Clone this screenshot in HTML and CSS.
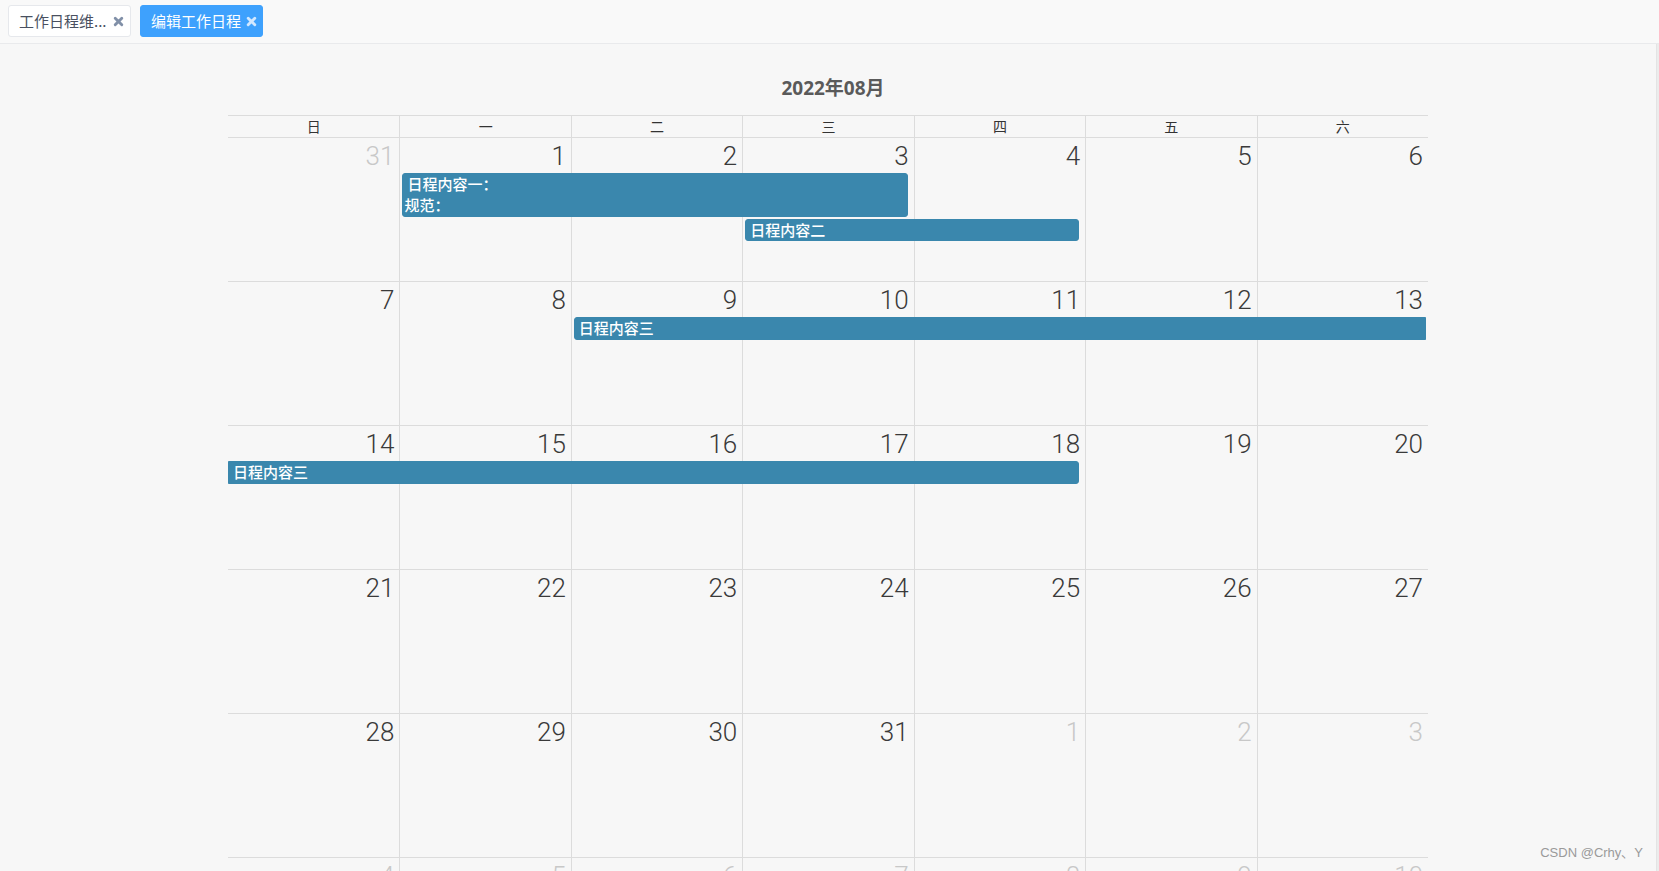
FILE: index.html
```html
<!DOCTYPE html>
<html lang="zh-CN">
<head>
<meta charset="utf-8">
<title>编辑工作日程</title>
<link rel="stylesheet" href="styles.css">
</head>
<body>
<div class="topbar">
  <div class="tab">
    <span class="tab-text">工作日程维...</span>
    <svg class="tab-close" viewBox="0 0 10 10"><path d="M2 2 L8 8 M8 2 L2 8"/></svg>
  </div>
  <div class="tab tab-active">
    <span class="tab-text">编辑工作日程</span>
    <svg class="tab-close" viewBox="0 0 10 10"><path d="M2 2 L8 8 M8 2 L2 8"/></svg>
  </div>
</div>
<div class="main">
  <div class="content">
    <div class="calendar">
      <h2 class="cal-title">2022年08月</h2>
      <div class="dow">
        <div>日</div><div>一</div><div>二</div><div>三</div><div>四</div><div>五</div><div>六</div>
      </div>
      <div class="weeks">
        <div class="week">
          <div class="day other">31</div>
          <div class="day">1</div>
          <div class="day">2</div>
          <div class="day">3</div>
          <div class="day">4</div>
          <div class="day">5</div>
          <div class="day">6</div>
          <div class="ev ev-start ev-end r2 c2-5"><span class="ev-first">日程内容一：</span><br>规范：</div>
          <div class="ev ev-start ev-end r3 c4-6"><span class="ev-first">日程内容二</span></div>
        </div>
        <div class="week">
          <div class="day">7</div>
          <div class="day">8</div>
          <div class="day">9</div>
          <div class="day">10</div>
          <div class="day">11</div>
          <div class="day">12</div>
          <div class="day">13</div>
          <div class="ev ev-start r2 c3-8"><span class="ev-first">日程内容三</span></div>
        </div>
        <div class="week">
          <div class="day">14</div>
          <div class="day">15</div>
          <div class="day">16</div>
          <div class="day">17</div>
          <div class="day">18</div>
          <div class="day">19</div>
          <div class="day">20</div>
          <div class="ev ev-end r2 c1-6"><span class="ev-first">日程内容三</span></div>
        </div>
        <div class="week">
          <div class="day">21</div>
          <div class="day">22</div>
          <div class="day">23</div>
          <div class="day">24</div>
          <div class="day">25</div>
          <div class="day">26</div>
          <div class="day">27</div>
        </div>
        <div class="week">
          <div class="day">28</div>
          <div class="day">29</div>
          <div class="day">30</div>
          <div class="day">31</div>
          <div class="day other">1</div>
          <div class="day other">2</div>
          <div class="day other">3</div>
        </div>
        <div class="week">
          <div class="day other">4</div>
          <div class="day other">5</div>
          <div class="day other">6</div>
          <div class="day other">7</div>
          <div class="day other">8</div>
          <div class="day other">9</div>
          <div class="day other">10</div>
        </div>
      </div>
    </div>
  </div>
  <div class="edge"></div>
</div>
<div class="watermark">CSDN @Crhy、Y</div>
</body>
</html>
```
FILE: styles.css
```css
html, body {
  margin: 0;
  padding: 0;
  height: 100%;
  overflow: hidden;
}
body {
  background: #f8f8f8;
  font-family: "Noto Sans CJK SC", "Noto Sans", sans-serif;
  color: #333;
  position: relative;
}

/* top tab bar */
.topbar {
  height: 44px;
  box-sizing: border-box;
  border-bottom: 1px solid #e9eaec;
  padding: 5px 0 0 8px;
  display: flex;
  gap: 9px;
  align-items: flex-start;
  background: #f9f9f9;
}
.tab {
  height: 32px;
  box-sizing: border-box;
  width: 123px;
  border: 1px solid #e6e8ec;
  border-radius: 3px;
  background: #fff;
  display: flex;
  align-items: center;
  padding: 0 6px 0 10px;
  color: #495060;
  font-size: 15px;
}
.tab-text {
  flex: 1;
  white-space: nowrap;
  line-height: 20px;
}
.tab-close {
  width: 11px;
  height: 11px;
  fill: none;
  stroke: #8190a8;
  stroke-width: 2.6;
  stroke-linecap: round;
}
.tab-active {
  background: #3ea1fd;
  border-color: #3ea1fd;
  color: #fff;
  padding-right: 5px;
}
.tab-active .tab-close {
  stroke: #d2e8ff;
}

/* main area */
.main {
  display: flex;
  height: calc(100% - 44px);
}
.content {
  flex: 1;
  background: #f7f7f7;
}
.edge {
  width: 2px;
  border-left: 1px solid #e4e4e4;
  background: #ececec;
}

.calendar {
  width: 1200px;
  margin: 0 auto;
}
.cal-title {
  margin: 0;
  padding: 32px 0 0 10px;
  height: 39px;
  box-sizing: content-box;
  text-align: center;
  font-size: 19px;
  line-height: 24px;
  font-weight: bold;
  color: #5a5a5a;
  font-family: "Open Sans", "Noto Sans CJK SC", sans-serif;
}

.dow {
  display: grid;
  grid-template-columns: repeat(7, 1fr);
  border-top: 1px solid #dcdcdc;
  border-bottom: 1px solid #dcdcdc;
  height: 23px;
  box-sizing: border-box;
  font-size: 14px;
  line-height: 21px;
  color: #333;
  text-align: center;
}
.dow > div + div {
  border-left: 1px solid #dcdcdc;
}

.week {
  display: grid;
  grid-template-columns: repeat(7, 1fr);
  grid-template-rows: 35px auto auto 1fr;
  height: 144px;
  box-sizing: border-box;
  border-bottom: 1px solid #dcdcdc;
}
.day {
  grid-row: 1 / -1;
  border-left: 1px solid #dcdcdc;
  text-align: right;
  padding: 5px 5px 0 0;
  font-family: "Roboto", "Lato", sans-serif;
  font-weight: 300;
  font-size: 26px;
  line-height: 26px;
  color: #3a3a3a;
}
.day:nth-child(1) { grid-column: 1; border-left: none; }
.day:nth-child(2) { grid-column: 2; }
.day:nth-child(3) { grid-column: 3; }
.day:nth-child(4) { grid-column: 4; }
.day:nth-child(5) { grid-column: 5; }
.day:nth-child(6) { grid-column: 6; }
.day:nth-child(7) { grid-column: 7; }
.day.other { color: #c8c8c8; }

.ev {
  z-index: 1;
  background: #3a87ad;
  border: 1px solid #3a87ad;
  color: #fff;
  font-size: 15px;
  line-height: 20.8px;
  font-weight: 500;
  padding: 0 1px;
  margin: 0 2px 2px 0;
  white-space: nowrap;
  overflow: hidden;
}
.ev-first { padding-left: 3px; }
.ev-start {
  margin-left: 3px;
  border-top-left-radius: 3px;
  border-bottom-left-radius: 3px;
}
.ev-end {
  margin-right: 6px;
  border-top-right-radius: 3px;
  border-bottom-right-radius: 3px;
}
.r2 { grid-row: 2; }
.r3 { grid-row: 3; }
.c2-5 { grid-column: 2 / 5; }
.c4-6 { grid-column: 4 / 6; }
.c3-8 { grid-column: 3 / 8; }
.c1-6 { grid-column: 1 / 6; }

.watermark {
  position: absolute;
  right: 16px;
  bottom: 10px;
  font-family: "Liberation Sans", Arial, sans-serif;
  font-size: 13px;
  color: #9a9a9a;
}
```
